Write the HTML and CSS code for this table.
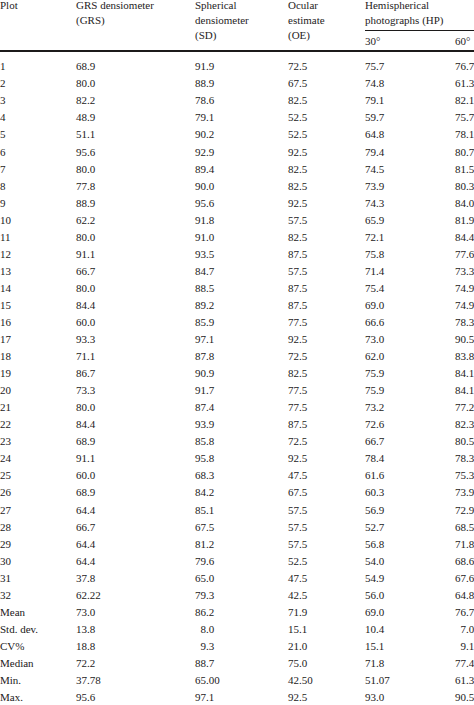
FILE: index.html
```html
<!DOCTYPE html>
<html lang="en">
<head>
<meta charset="utf-8">
<title>Canopy cover estimates</title>
<link rel="stylesheet" href="styles.css">
</head>
<body>
<div class="table">
  <div class="head">
    <div class="hc c-plot">Plot</div>
    <div class="hc c-grs">GRS densiometer<br>(GRS)</div>
    <div class="hc c-sd">Spherical<br>densiometer<br>(SD)</div>
    <div class="hc c-oe">Ocular<br>estimate<br>(OE)</div>
    <div class="hc c-hp">Hemispherical<br>photographs (HP)</div>
    <div class="hc sub s30">30°</div>
    <div class="hc sub s60">60°</div>
  </div>
  <div class="body">
    <div class="row"><span>1</span><span>68.9</span><span>91.9</span><span>72.5</span><span>75.7</span><span>76.7</span></div>
    <div class="row"><span>2</span><span>80.0</span><span>88.9</span><span>67.5</span><span>74.8</span><span>61.3</span></div>
    <div class="row"><span>3</span><span>82.2</span><span>78.6</span><span>82.5</span><span>79.1</span><span>82.1</span></div>
    <div class="row"><span>4</span><span>48.9</span><span>79.1</span><span>52.5</span><span>59.7</span><span>75.7</span></div>
    <div class="row"><span>5</span><span>51.1</span><span>90.2</span><span>52.5</span><span>64.8</span><span>78.1</span></div>
    <div class="row"><span>6</span><span>95.6</span><span>92.9</span><span>92.5</span><span>79.4</span><span>80.7</span></div>
    <div class="row"><span>7</span><span>80.0</span><span>89.4</span><span>82.5</span><span>74.5</span><span>81.5</span></div>
    <div class="row"><span>8</span><span>77.8</span><span>90.0</span><span>82.5</span><span>73.9</span><span>80.3</span></div>
    <div class="row"><span>9</span><span>88.9</span><span>95.6</span><span>92.5</span><span>74.3</span><span>84.0</span></div>
    <div class="row"><span>10</span><span>62.2</span><span>91.8</span><span>57.5</span><span>65.9</span><span>81.9</span></div>
    <div class="row"><span>11</span><span>80.0</span><span>91.0</span><span>82.5</span><span>72.1</span><span>84.4</span></div>
    <div class="row"><span>12</span><span>91.1</span><span>93.5</span><span>87.5</span><span>75.8</span><span>77.6</span></div>
    <div class="row"><span>13</span><span>66.7</span><span>84.7</span><span>57.5</span><span>71.4</span><span>73.3</span></div>
    <div class="row"><span>14</span><span>80.0</span><span>88.5</span><span>87.5</span><span>75.4</span><span>74.9</span></div>
    <div class="row"><span>15</span><span>84.4</span><span>89.2</span><span>87.5</span><span>69.0</span><span>74.9</span></div>
    <div class="row"><span>16</span><span>60.0</span><span>85.9</span><span>77.5</span><span>66.6</span><span>78.3</span></div>
    <div class="row"><span>17</span><span>93.3</span><span>97.1</span><span>92.5</span><span>73.0</span><span>90.5</span></div>
    <div class="row"><span>18</span><span>71.1</span><span>87.8</span><span>72.5</span><span>62.0</span><span>83.8</span></div>
    <div class="row"><span>19</span><span>86.7</span><span>90.9</span><span>82.5</span><span>75.9</span><span>84.1</span></div>
    <div class="row"><span>20</span><span>73.3</span><span>91.7</span><span>77.5</span><span>75.9</span><span>84.1</span></div>
    <div class="row"><span>21</span><span>80.0</span><span>87.4</span><span>77.5</span><span>73.2</span><span>77.2</span></div>
    <div class="row"><span>22</span><span>84.4</span><span>93.9</span><span>87.5</span><span>72.6</span><span>82.3</span></div>
    <div class="row"><span>23</span><span>68.9</span><span>85.8</span><span>72.5</span><span>66.7</span><span>80.5</span></div>
    <div class="row"><span>24</span><span>91.1</span><span>95.8</span><span>92.5</span><span>78.4</span><span>78.3</span></div>
    <div class="row"><span>25</span><span>60.0</span><span>68.3</span><span>47.5</span><span>61.6</span><span>75.3</span></div>
    <div class="row"><span>26</span><span>68.9</span><span>84.2</span><span>67.5</span><span>60.3</span><span>73.9</span></div>
    <div class="row"><span>27</span><span>64.4</span><span>85.1</span><span>57.5</span><span>56.9</span><span>72.9</span></div>
    <div class="row"><span>28</span><span>66.7</span><span>67.5</span><span>57.5</span><span>52.7</span><span>68.5</span></div>
    <div class="row"><span>29</span><span>64.4</span><span>81.2</span><span>57.5</span><span>56.8</span><span>71.8</span></div>
    <div class="row"><span>30</span><span>64.4</span><span>79.6</span><span>52.5</span><span>54.0</span><span>68.6</span></div>
    <div class="row"><span>31</span><span>37.8</span><span>65.0</span><span>47.5</span><span>54.9</span><span>67.6</span></div>
    <div class="row"><span>32</span><span>62.22</span><span>79.3</span><span>42.5</span><span>56.0</span><span>64.8</span></div>
    <div class="row"><span>Mean</span><span>73.0</span><span>86.2</span><span>71.9</span><span>69.0</span><span>76.7</span></div>
    <div class="row"><span>Std. dev.</span><span>13.8</span><span>&#8199;8.0</span><span>15.1</span><span>10.4</span><span>&#8199;7.0</span></div>
    <div class="row"><span>CV%</span><span>18.8</span><span>&#8199;9.3</span><span>21.0</span><span>15.1</span><span>&#8199;9.1</span></div>
    <div class="row"><span>Median</span><span>72.2</span><span>88.7</span><span>75.0</span><span>71.8</span><span>77.4</span></div>
    <div class="row"><span>Min.</span><span>37.78</span><span>65.00</span><span>42.50</span><span>51.07</span><span>61.3</span></div>
    <div class="row"><span>Max.</span><span>95.6</span><span>97.1</span><span>92.5</span><span>93.0</span><span>90.5</span></div>
  </div>
</div>
</body>
</html>
```
FILE: styles.css
```css
html, body {
  margin: 0;
  padding: 0;
  background: #ffffff;
  overflow: hidden;
}

body {
  font-family: "Liberation Serif", "Times New Roman", serif;
  font-size: 11px;
  color: #1c1a1a;
  width: 474px;
  height: 705px;
}

.table {
  width: 474px;
  overflow: hidden;
}

.head {
  display: grid;
  grid-template-columns: 76px 119px 93px 77px 90px 19px;
  grid-template-rows: auto auto;
  margin-top: -2px;
  border-bottom: 2px solid #1c1a1a;
  line-height: 15px;
  color: #262324;
}

.hc {
  white-space: nowrap;
}

.c-plot { grid-column: 1; grid-row: 1 / span 2; }
.c-grs  { grid-column: 2; grid-row: 1 / span 2; }
.c-sd   { grid-column: 3; grid-row: 1 / span 2; }
.c-oe   { grid-column: 4; grid-row: 1 / span 2; }

.c-hp {
  grid-column: 5 / span 2;
  grid-row: 1;
  padding-bottom: 2px;
}

.sub {
  grid-row: 2;
  border-top: 1px solid #1c1a1a;
  padding-top: 3px;
  padding-bottom: 1px;
}

.s30 { grid-column: 5; }
.s60 { grid-column: 6; }

.body {
  padding-top: 6.3px;
}

.row {
  display: grid;
  grid-template-columns: 76px 119px 93px 77px 90px 19px;
  line-height: 17.05px;
  white-space: nowrap;
}

.row span {
  overflow: visible;
}
```
